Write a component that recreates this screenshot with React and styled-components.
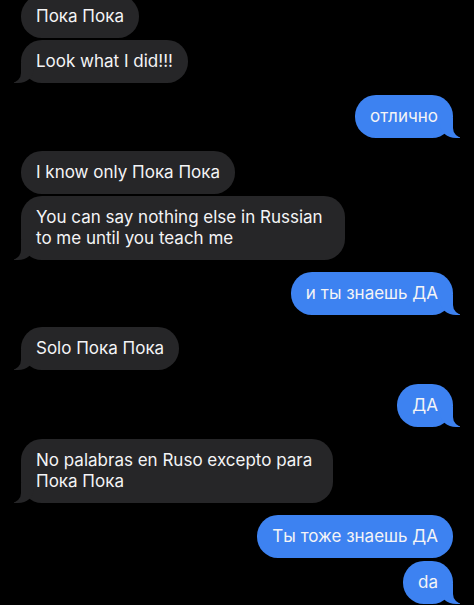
import React from "react";
import styled, { createGlobalStyle, css } from "styled-components";

const Global = createGlobalStyle`
  html, body { margin: 0; padding: 0; background: #000; }
  body { width: 474px; height: 605px; overflow: hidden; }
  #root { height: 605px; overflow: hidden; }
`;

const Thread = styled.div`
  display: flex;
  flex-direction: column;
  padding: 0 21px;
  margin-top: -5px;
  font-family: Inter, "Liberation Sans", "Noto Sans", sans-serif;
  -webkit-font-smoothing: antialiased;
`;

const Row = styled.div`
  display: flex;
  justify-content: ${(p) => (p.$me ? "flex-end" : "flex-start")};
  margin-top: ${(p) => p.$gap}px;
`;

const Bubble = styled.div`
  position: relative;
  box-sizing: border-box;
  min-height: 43px;
  padding: 11px 15px 11px 15px;
  border-radius: 21px;
  font-size: 17px;
  line-height: 21px;
  color: #f4f4f6;
  background: ${(p) => (p.$me ? "#3d82f1" : "#262628")};
  padding-right: ${(p) => p.$pr || 15}px;
  white-space: nowrap;

  ${(p) =>
    p.$tail &&
    !p.$me &&
    css`
      &::before {
        content: "";
        position: absolute;
        bottom: 0;
        left: -7px;
        width: 20px;
        height: 20px;
        background: #262628;
        border-bottom-right-radius: 16px 14px;
      }
      &::after {
        content: "";
        position: absolute;
        bottom: 0;
        left: -26px;
        width: 26px;
        height: 20px;
        background: #000;
        border-bottom-right-radius: 10px;
      }
    `}

  ${(p) =>
    p.$tail &&
    p.$me &&
    css`
      &::before {
        content: "";
        position: absolute;
        bottom: 0;
        right: -7px;
        width: 20px;
        height: 20px;
        background: #3d82f1;
        border-bottom-left-radius: 16px 14px;
      }
      &::after {
        content: "";
        position: absolute;
        bottom: 0;
        right: -26px;
        width: 26px;
        height: 20px;
        background: #000;
        border-bottom-left-radius: 10px;
      }
    `}
`;

const Text = styled.span`
  position: relative;
  z-index: 1;
`;

const messages = [
  { me: false, gap: 0, lines: ["Пока Пока"] },
  { me: false, gap: 2, lines: ["Look what I did!!!"], tail: true },
  { me: true, gap: 12, lines: ["отлично"], tail: true },
  { me: false, gap: 13, lines: ["I know only Пока Пока"] },
  { me: false, gap: 2, lines: ["You can say nothing else in Russian", "to me until you teach me"], tail: true, pr: 22 },
  { me: true, gap: 12, lines: ["и ты знаешь ДА"], tail: true },
  { me: false, gap: 12, lines: ["Solo Пока Пока"], tail: true },
  { me: true, gap: 14, lines: ["ДА"], tail: true },
  { me: false, gap: 12, lines: ["No palabras en Ruso excepto para", "Пока Пока"], tail: true, pr: 21 },
  { me: true, gap: 12, lines: ["Ты тоже знаешь ДА"] },
  { me: true, gap: 3, lines: ["da"], tail: true },
];

export default function App() {
  return (
    <>
      <Global />
      <Thread>
        {messages.map((m, i) => (
          <Row key={i} $me={m.me} $gap={m.gap}>
            <Bubble $me={m.me} $tail={m.tail} $pr={m.pr}>
              <Text>
                {m.lines.map((l, j) => (
                  <React.Fragment key={j}>
                    {j > 0 && <br />}
                    {l}
                  </React.Fragment>
                ))}
              </Text>
            </Bubble>
          </Row>
        ))}
      </Thread>
    </>
  );
}
